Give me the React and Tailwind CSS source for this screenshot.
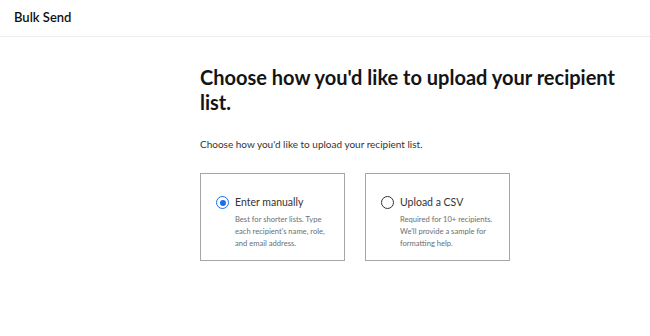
import React from "react";

const options = [
  {
    id: "manual",
    title: "Enter manually",
    desc: "Best for shorter lists. Type each recipient's name, role, and email address.",
    checked: true,
  },
  {
    id: "csv",
    title: "Upload a CSV",
    desc: "Required for 10+ recipients. We'll provide a sample for formatting help.",
    checked: false,
  },
];

const Radio = ({ checked }) =>
  checked ? (
    <span className="mt-[1px] flex h-[13px] w-[13px] shrink-0 items-center justify-center rounded-full border-[1.5px] border-[#1a6ef5]">
      <span className="h-[6px] w-[6px] rounded-full bg-[#1a6ef5]" />
    </span>
  ) : (
    <span className="mt-[1px] h-[13px] w-[13px] shrink-0 rounded-full border-[1.5px] border-[#333]" />
  );

export default function App() {
  return (
    <div className="h-[336px] w-[650px] bg-white font-['Lato',sans-serif] text-[#1e1e1e]">
      {/* Header */}
      <div className="flex h-[37px] items-center border-b border-[#ececec] px-[14px]">
        <span className="text-[13px] font-semibold text-[#111]">Bulk Send</span>
      </div>

      {/* Content */}
      <div className="pl-[200px] pt-[28px]">
        <h1 className="w-[440px] text-[20px] font-bold leading-[25px] text-[#141414]">
          Choose how you'd like to upload your recipient list.
        </h1>
        <p className="mt-[22px] text-[10px] leading-[14px] text-[#333]">
          Choose how you'd like to upload your recipient list.
        </p>

        <div className="mt-[22px] flex gap-[20px]">
          {options.map((o) => (
            <label
              key={o.id}
              className="flex h-[88px] w-[145px] cursor-pointer gap-[6px] border border-[#a6a6a6] pl-[15px] pr-[14px] pt-[21px]"
            >
              <Radio checked={o.checked} />
              <div>
                <div className="text-[10.5px] leading-[15px] text-[#333]">{o.title}</div>
                <div className="mt-[3px] text-[7.6px] leading-[12px] text-[#6e6e6e]">{o.desc}</div>
              </div>
            </label>
          ))}
        </div>
      </div>
    </div>
  );
}
